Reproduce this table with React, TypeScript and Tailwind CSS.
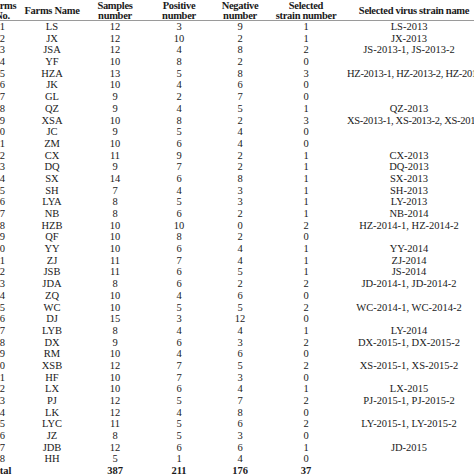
const rows: [number, string, number, number, number, number, string][] = [
  [1, "LS", 12, 3, 9, 1, "LS-2013"],
  [2, "JX", 12, 10, 2, 1, "JX-2013"],
  [3, "JSA", 12, 4, 8, 2, "JS-2013-1, JS-2013-2"],
  [4, "YF", 10, 8, 2, 0, ""],
  [5, "HZA", 13, 5, 8, 3, "HZ-2013-1, HZ-2013-2, HZ-2013-3"],
  [6, "JK", 10, 4, 6, 0, ""],
  [7, "GL", 9, 2, 7, 0, ""],
  [8, "QZ", 9, 4, 5, 1, "QZ-2013"],
  [9, "XSA", 10, 8, 2, 3, "XS-2013-1, XS-2013-2, XS-2013-3"],
  [10, "JC", 9, 5, 4, 0, ""],
  [11, "ZM", 10, 6, 4, 0, ""],
  [12, "CX", 11, 9, 2, 1, "CX-2013"],
  [13, "DQ", 9, 7, 2, 1, "DQ-2013"],
  [14, "SX", 14, 6, 8, 1, "SX-2013"],
  [15, "SH", 7, 4, 3, 1, "SH-2013"],
  [16, "LYA", 8, 5, 3, 1, "LY-2013"],
  [17, "NB", 8, 6, 2, 1, "NB-2014"],
  [18, "HZB", 10, 10, 0, 2, "HZ-2014-1, HZ-2014-2"],
  [19, "QF", 10, 8, 2, 0, ""],
  [20, "YY", 10, 6, 4, 1, "YY-2014"],
  [21, "ZJ", 11, 7, 4, 1, "ZJ-2014"],
  [22, "JSB", 11, 6, 5, 1, "JS-2014"],
  [23, "JDA", 8, 6, 2, 2, "JD-2014-1, JD-2014-2"],
  [24, "ZQ", 10, 4, 6, 0, ""],
  [25, "WC", 10, 5, 5, 2, "WC-2014-1, WC-2014-2"],
  [26, "DJ", 15, 3, 12, 0, ""],
  [27, "LYB", 8, 4, 4, 1, "LY-2014"],
  [28, "DX", 9, 6, 3, 2, "DX-2015-1, DX-2015-2"],
  [29, "RM", 10, 4, 6, 0, ""],
  [30, "XSB", 12, 7, 5, 2, "XS-2015-1, XS-2015-2"],
  [31, "HF", 10, 7, 3, 0, ""],
  [32, "LX", 10, 6, 4, 1, "LX-2015"],
  [33, "PJ", 12, 5, 7, 2, "PJ-2015-1, PJ-2015-2"],
  [34, "LK", 12, 4, 8, 0, ""],
  [35, "LYC", 11, 5, 6, 2, "LY-2015-1, LY-2015-2"],
  [36, "JZ", 8, 5, 3, 0, ""],
  [37, "JDB", 12, 6, 6, 1, "JD-2015"],
  [38, "HH", 5, 1, 4, 0, ""],
];

const grid = "grid grid-cols-[40px_64px_62px_66px_56px_76px_134px]";
const cell = "flex items-center justify-center whitespace-nowrap";

const App = () => {
  return (
    <div className="w-[474px] h-[474px] overflow-hidden bg-white text-[#1a1a1a] font-['Liberation_Serif',serif]">
      <div className="ml-[-20px] w-[498px]">
        {/* Header */}
        <div className={`${grid} h-[21px] border-b border-[#9a9a9a] text-[10.5px] leading-[10px] font-bold tracking-[-0.3px] pt-px`}>
          <div className={`${cell} flex-col pl-[5px]`}><span>Farms</span><span>No.</span></div>
          <div className={cell}>Farms Name</div>
          <div className={`${cell} flex-col`}><span>Samples</span><span>number</span></div>
          <div className={`${cell} flex-col`}><span>Positive</span><span>number</span></div>
          <div className={`${cell} flex-col`}><span>Negative</span><span>number</span></div>
          <div className={`${cell} flex-col`}><span>Selected</span><span>strain number</span></div>
          <div className={`${cell} pl-[6px]`}>Selected virus strain name</div>
        </div>

        {/* Rows */}
        {rows.map(([no, name, s, p, n, sel, strains]) => {
          const triple = strains.split(",").length === 3;
          return (
            <div key={no} className={`${grid} h-[11.7px] text-[10.5px] leading-[11.7px]`}>
              <div className="flex items-center justify-end pr-[15px]">{no}</div>
              <div className={cell}>{name}</div>
              <div className={cell}>{s}</div>
              <div className={cell}>{p}</div>
              <div className={cell}>{n}</div>
              <div className={cell}>{sel}</div>
              <div
                className={
                  triple
                    ? "flex items-center justify-start whitespace-nowrap pl-[3px] tracking-[-0.3px]"
                    : "flex items-center justify-center whitespace-nowrap pr-[4px]"
                }
              >
                {strains}
              </div>
            </div>
          );
        })}

        {/* Total */}
        <div className={`${grid} h-[11.7px] text-[10.5px] leading-[11.7px] font-bold`}>
          <div className={cell}>Total</div>
          <div className={cell}></div>
          <div className={cell}>387</div>
          <div className={cell}>211</div>
          <div className={cell}>176</div>
          <div className={cell}>37</div>
          <div className={cell}></div>
        </div>
      </div>
    </div>
  );
};

export default App;
